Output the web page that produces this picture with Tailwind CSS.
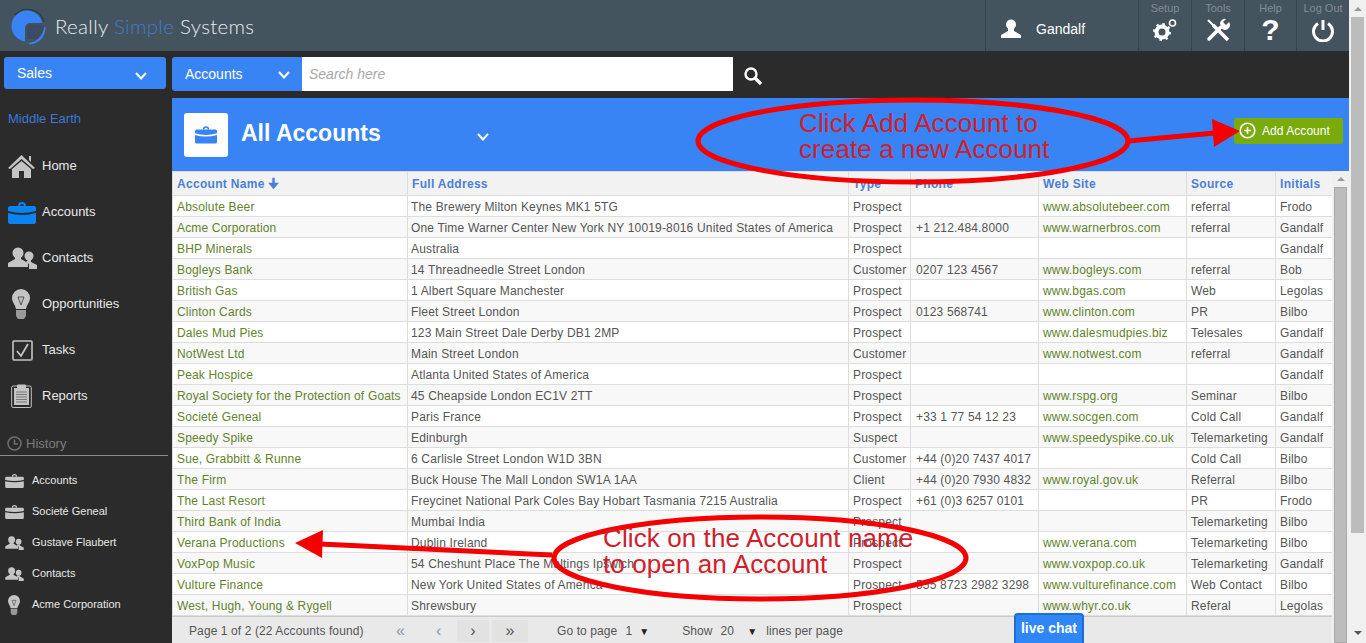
<!DOCTYPE html>
<html lang="en">
<head>
  <meta charset="UTF-8">
  <title>All Accounts - Really Simple Systems</title>
  <script src="https://cdn.jsdelivr.net/npm/@tailwindcss/browser@4"></script>
</head>
<body class="relative h-[643px] w-[1366px] overflow-hidden bg-[#2b2b2b] font-['Liberation_Sans',Arial,sans-serif]">

  <div class="flex h-[643px]">
    <div class="flex w-[1349px] flex-col">

      <!-- top bar -->
      <header class="flex h-[51px] shrink-0 items-stretch bg-[#44545f]">
        <div class="flex flex-1 items-center pl-[11px] pt-[2px]">
          <svg width="36" height="38" viewBox="0 0 36 38">
            <circle cx="16" cy="18" r="15.5" fill="#3884f4"/>
            <path d="M4 7 a17 17 0 0 1 29 7" fill="none" stroke="#2f3d48" stroke-width="1.4"/>
            <path d="M14 20 a5 5 0 0 1 5 -5 H36 V34 H14z" fill="#44545f"/>
            <path d="M15.5 21 a4.5 4.5 0 0 1 4.5 -4.5 H32.5 Q32.5 26 26 31 H15.5z" fill="#3c4a63"/>
            <path d="M17 35 Q30 34 33.5 19 L34.5 19 Q34 34 19 36.5z" fill="#3884f4"/>
          </svg>
          <span class="ml-[8px] font-['Lato',sans-serif] text-[20.5px] font-light tracking-[0.3px] text-[#e8ecee]">Really <span class="text-[#3f7cc9]">Simple</span> Systems</span>
        </div>
        <div class="flex w-[153px] items-center border-l border-[#36434c] pl-[15px] pt-[7px]">
          <svg width="20" height="20" viewBox="0 0 20 20" fill="#fff"><circle cx="10" cy="5.5" r="5"/><path d="M7 9 h6 v3 l7 4 v3 h-20 v-3 l7 -4z"/></svg>
          <span class="ml-[15px] text-[14px] text-white">Gandalf</span>
        </div>
        <div class="flex w-[53px] flex-col items-center border-l border-[#36434c] pt-[2px]">
          <span class="text-[11px] leading-[13px] text-[#808c94]">Setup</span>
          <svg class="mt-[3px]" width="24" height="24" viewBox="0 0 24 24" fill="none" stroke="#fff"><circle cx="9" cy="14" r="5.5" stroke-width="4"/><circle cx="9" cy="14" r="8" stroke-width="2" stroke-dasharray="2.5 3.8"/><circle cx="19.5" cy="5" r="3" stroke-width="1.6"/></svg>
        </div>
        <div class="flex w-[53px] flex-col items-center border-l border-[#36434c] pt-[2px]">
          <span class="text-[11px] leading-[13px] text-[#808c94]">Tools</span>
          <svg class="mt-[3px]" width="24" height="24" viewBox="0 0 24 24" fill="none" stroke="#fff"><path d="M2 2 L8 8" stroke-width="2"/><path d="M7 7 L22 22" stroke-width="3.5"/><path d="M3 21 L15 9" stroke-width="3.5" stroke-linecap="round"/><path d="M14 5 a5 5 0 0 1 6 -4 l-3 3 l3 3 l3 -3 a5 5 0 0 1 -8 6z" fill="#fff" stroke="none"/></svg>
        </div>
        <div class="flex w-[52px] flex-col items-center border-l border-[#36434c] pt-[2px]">
          <span class="text-[11px] leading-[13px] text-[#808c94]">Help</span>
          <span class="text-[30px] font-bold leading-[30px] text-white">?</span>
        </div>
        <div class="flex w-[53px] flex-col items-center border-l border-[#36434c] pt-[2px]">
          <span class="text-[11px] leading-[13px] text-[#808c94]">Log Out</span>
          <svg class="mt-[3px]" width="24" height="24" viewBox="0 0 24 24" fill="none" stroke="#fff" stroke-width="3"><path d="M7 5.5 a9.5 9.5 0 1 0 10 0"/><path d="M12 2 V12"/></svg>
        </div>
      </header>

      <div class="flex min-h-0 flex-1">

        <!-- sidebar -->
        <aside class="flex w-[172px] shrink-0 flex-col">
          <div class="ml-[4px] mr-[6px] mt-[6px] flex h-[32px] items-center justify-between rounded-[3px] bg-[#3884f4] pl-[13px] pr-[19px]">
            <span class="text-[14px] text-white">Sales</span>
            <svg class="mt-[5px]" width="12" height="8" viewBox="0 0 12 8" fill="none" stroke="#fff" stroke-width="2"><path d="M1 1 L6 6.5 L11 1"/></svg>
          </div>
          <div class="mt-[22px] pl-[8px] text-[13px] leading-[16px] text-[#3a78d8]">Middle Earth</div>

          <nav class="mt-[16px] flex flex-col">
            <a class="flex h-[46px] items-center pl-[8px] text-[13px] text-[#e8e8e8]">
              <span class="flex w-[34px] justify-start"><svg width="27" height="24" viewBox="0 0 27 24" fill="#c4c4c4"><path d="M13.5 1 L27 14 L25 15 L13.5 5 L2 15 L0 14z"/><path d="M21 2 h2 v6 l-2 -2z"/><path d="M13.5 7 L23 15 V24 H16 V17 H11 V24 H4 V15z"/></svg></span>Home
            </a>
            <a class="flex h-[46px] items-center pl-[8px] text-[13px] text-[#e8e8e8]">
              <span class="flex w-[34px] justify-start"><svg width="28" height="23" viewBox="0 0 28 23" fill="#0a84f0"><path d="M10 5 a4 4 0 0 1 8 0 h-2 a2 2 0 0 0 -4 0z"/><path d="M2 5 H26 a2 2 0 0 1 2 2 V10 Q14 14 0 10 V7 a2 2 0 0 1 2 -2z"/><path d="M0 12 Q14 16 28 12 V21 a2 2 0 0 1 -2 2 H2 a2 2 0 0 1 -2 -2z"/></svg></span>Accounts
            </a>
            <a class="flex h-[46px] items-center pl-[8px] text-[13px] text-[#e8e8e8]">
              <span class="flex w-[34px] justify-start"><svg width="29" height="22" viewBox="0 0 29 22" fill="#c4c4c4"><circle cx="10" cy="6" r="5.5"/><path d="M7 10 h6 v2 l7 4 v4 h-20 v-4 l7 -4z"/><circle cx="21" cy="9" r="4.5"/><path d="M20 13 h3 v2 l6 3 v4 h-8 v-5 l-3 -2z"/></svg></span>Contacts
            </a>
            <a class="flex h-[46px] items-center pl-[8px] text-[13px] text-[#e8e8e8]">
              <span class="flex w-[34px] justify-start pl-[4px]"><svg width="18" height="30" viewBox="0 0 18 30"><path d="M9 0 a9 9 0 0 1 9 9 c0 4 -3 6 -4 11 H4 C3 15 0 13 0 9 a9 9 0 0 1 9 -9z" fill="#c4c4c4"/><path d="M6 8 h6 L9 16z" fill="none" stroke="#555" stroke-width="1"/><path d="M4 21 h10 v6 l-2 3 H6 l-2 -3z" fill="#9a9a9a"/></svg></span>Opportunities
            </a>
            <a class="flex h-[46px] items-center pl-[8px] text-[13px] text-[#e8e8e8]">
              <span class="flex w-[34px] justify-start pl-[4px]"><svg width="21" height="21" viewBox="0 0 21 21" fill="none"><rect x="1" y="1" width="19" height="19" rx="1" stroke="#c4c4c4" stroke-width="1.6"/><path d="M5 11 L9 16 L16 4" stroke="#c4c4c4" stroke-width="1.8"/></svg></span>Tasks
            </a>
            <a class="flex h-[46px] items-center pl-[8px] text-[13px] text-[#e8e8e8]">
              <span class="flex w-[34px] justify-start pl-[3px]"><svg width="21" height="24" viewBox="0 0 21 24"><rect x="0.7" y="2" width="19.6" height="21.5" rx="1.5" fill="#2b2b2b" stroke="#c4c4c4"/><rect x="3" y="4" width="15" height="17" fill="#c4c4c4"/><path d="M5 8h11M5 10.5h11M5 13h11M5 15.5h11M5 18h11" stroke="#777" stroke-width="1"/><rect x="6" y="0.5" width="9" height="4" rx="1" fill="#c4c4c4"/></svg></span>Reports
            </a>
          </nav>

          <div class="mt-[16px] mr-[4px] flex items-center border-b border-[#8a8a8a] pb-[3px] pl-[7px] text-[13px] leading-[17px] text-[#7d7d7d]">
            <svg class="mr-[4px]" width="15" height="15" viewBox="0 0 15 15" fill="none" stroke="#6e6e6e" stroke-width="1.5"><circle cx="7.5" cy="7.5" r="6.5"/><path d="M7.5 3.5 V8 H11"/></svg>History
          </div>

          <div class="mt-[9px] flex flex-col text-[11px] text-[#e8e8e8]">
            <a class="flex h-[31px] items-center pl-[5px]"><span class="w-[27px]"><svg width="19" height="14" viewBox="0 0 28 21" fill="#c4c4c4"><path d="M10 4 a4 4 0 0 1 8 0 h-2 a2 2 0 0 0 -4 0z"/><path d="M2 4 H26 a2 2 0 0 1 2 2 V9 Q14 12 0 9 V6 a2 2 0 0 1 2 -2z"/><path d="M0 11 Q14 14 28 11 V19 a2 2 0 0 1 -2 2 H2 a2 2 0 0 1 -2 -2z"/></svg></span>Accounts</a>
            <a class="flex h-[31px] items-center pl-[5px]"><span class="w-[27px]"><svg width="19" height="14" viewBox="0 0 28 21" fill="#c4c4c4"><path d="M10 4 a4 4 0 0 1 8 0 h-2 a2 2 0 0 0 -4 0z"/><path d="M2 4 H26 a2 2 0 0 1 2 2 V9 Q14 12 0 9 V6 a2 2 0 0 1 2 -2z"/><path d="M0 11 Q14 14 28 11 V19 a2 2 0 0 1 -2 2 H2 a2 2 0 0 1 -2 -2z"/></svg></span>Societé Geneal</a>
            <a class="flex h-[31px] items-center pl-[5px]"><span class="w-[27px]"><svg width="19" height="14" viewBox="0 0 29 22" fill="#c4c4c4"><circle cx="10" cy="6" r="5.5"/><path d="M7 10 h6 v2 l7 4 v4 h-20 v-4 l7 -4z"/><circle cx="21" cy="9" r="4.5"/><path d="M20 13 h3 v2 l6 3 v4 h-8 v-5 l-3 -2z"/></svg></span>Gustave Flaubert</a>
            <a class="flex h-[31px] items-center pl-[5px]"><span class="w-[27px]"><svg width="19" height="14" viewBox="0 0 29 22" fill="#c4c4c4"><circle cx="10" cy="6" r="5.5"/><path d="M7 10 h6 v2 l7 4 v4 h-20 v-4 l7 -4z"/><circle cx="21" cy="9" r="4.5"/><path d="M20 13 h3 v2 l6 3 v4 h-8 v-5 l-3 -2z"/></svg></span>Contacts</a>
            <a class="flex h-[31px] items-center pl-[8px]"><span class="w-[24px]"><svg width="12" height="20" viewBox="0 0 18 30"><path d="M9 0 a9 9 0 0 1 9 9 c0 4 -3 6 -4 11 H4 C3 15 0 13 0 9 a9 9 0 0 1 9 -9z" fill="#c4c4c4"/><path d="M6 8 h6 L9 16z" fill="none" stroke="#555"/><path d="M4 21 h10 v6 l-2 3 H6 l-2 -3z" fill="#9a9a9a"/></svg></span>Acme Corporation</a>
          </div>
        </aside>

        <!-- main -->
        <main class="flex min-w-0 flex-1 flex-col">
          <div class="mt-[6px] flex h-[34px] shrink-0 items-stretch">
            <div class="flex w-[130px] items-center justify-between rounded-l-[3px] bg-[#3884f4] pl-[13px] pr-[12px]">
              <span class="text-[14px] text-white">Accounts</span>
              <svg class="mt-[2px]" width="12" height="8" viewBox="0 0 12 8" fill="none" stroke="#fff" stroke-width="2"><path d="M1 1 L6 6.5 L11 1"/></svg>
            </div>
            <div class="flex w-[431px] items-center bg-white pl-[7px] text-[14px] italic text-[#a8a8a8]">Search here</div>
            <div class="flex w-[40px] items-center justify-center pt-[3px]">
              <svg width="20" height="20" viewBox="0 0 20 20" fill="none" stroke="#fff"><circle cx="8" cy="8" r="5.5" stroke-width="2.4"/><path d="M12 12 L18 18" stroke-width="3.2"/></svg>
            </div>
          </div>

          <div class="mt-[7px] flex h-[73px] shrink-0 items-center bg-[#3884f4] pl-[12px] pr-[6px]">
            <div class="flex h-[44px] w-[44px] items-center justify-center rounded-[3px] bg-white">
              <svg width="22" height="19" viewBox="0 0 28 23" fill="#3884f4"><path d="M10 5 a4 4 0 0 1 8 0 h-2 a2 2 0 0 0 -4 0z"/><path d="M2 5 H26 a2 2 0 0 1 2 2 V10 Q14 14 0 10 V7 a2 2 0 0 1 2 -2z"/><path d="M0 12 Q14 16 28 12 V21 a2 2 0 0 1 -2 2 H2 a2 2 0 0 1 -2 -2z"/></svg>
            </div>
            <h1 class="mb-[2px] ml-[13px] text-[23px] font-bold text-white">All Accounts</h1>
            <svg class="ml-[96px] mt-[5px]" width="12" height="8" viewBox="0 0 12 8" fill="none" stroke="#fff" stroke-width="2"><path d="M1 1 L6 6.5 L11 1"/></svg>
            <div class="mb-[8px] ml-auto flex h-[26px] w-[109px] items-center rounded-[2px] bg-[#7aab0c] pl-[5px] text-[12px] tracking-[0.05px] text-white">
              <svg class="mr-[6px]" width="17" height="17" viewBox="0 0 17 17" fill="none" stroke="#fff"><circle cx="8.5" cy="8.5" r="7.3" stroke-width="1.6"/><path d="M8.5 5 V12 M5 8.5 H12" stroke-width="1.6"/></svg>Add Account
            </div>
          </div>

          <div class="flex min-h-0 flex-1 overflow-hidden">
            <div class="flex w-[1160px] flex-col">
              <div class="min-h-0 flex-1 overflow-hidden bg-white">
                <table class="w-[1160px] table-fixed border-collapse text-[12px] tracking-[0.17px] text-[#555] [&_td]:h-[21px] [&_td]:overflow-hidden [&_td]:whitespace-nowrap [&_td]:border [&_td]:border-[#ddd] [&_td]:pl-[4px] [&_td]:pt-[2px] [&_td:nth-child(1)]:text-[#64822a] [&_td:nth-child(2)]:pl-[3px] [&_td:nth-child(4)]:pl-[5px] [&_td:nth-child(5)]:text-[#64822a] [&_th]:h-[24px] [&_th]:border [&_th]:border-[#ddd] [&_th]:bg-[#f2f2f2] [&_th]:pl-[4px] [&_th]:text-left [&_th]:font-bold [&_th]:tracking-[0.3px] [&_th]:text-[#4a80d8] [&_tbody_tr:nth-child(even)]:bg-[#f8f8f8]">
                  <colgroup>
                    <col class="w-[235px]"><col class="w-[441px]"><col class="w-[62px]"><col class="w-[128px]"><col class="w-[148px]"><col class="w-[89px]"><col class="w-[57px]">
                  </colgroup>
                  <thead>
                    <tr><th>Account Name <span class="text-[13px]">&#129035;</span></th><th>Full Address</th><th>Type</th><th>Phone</th><th>Web Site</th><th>Source</th><th>Initials</th></tr>
                  </thead>
                  <tbody>
                    <tr><td>Absolute Beer</td><td>The Brewery Milton Keynes MK1 5TG</td><td>Prospect</td><td></td><td>www.absolutebeer.com</td><td>referral</td><td>Frodo</td></tr>
                    <tr><td>Acme Corporation</td><td>One Time Warner Center New York NY 10019-8016 United States of America</td><td>Prospect</td><td>+1 212.484.8000</td><td>www.warnerbros.com</td><td>referral</td><td>Gandalf</td></tr>
                    <tr><td>BHP Minerals</td><td>Australia</td><td>Prospect</td><td></td><td></td><td></td><td>Gandalf</td></tr>
                    <tr><td>Bogleys Bank</td><td>14 Threadneedle Street London</td><td>Customer</td><td>0207 123 4567</td><td>www.bogleys.com</td><td>referral</td><td>Bob</td></tr>
                    <tr><td>British Gas</td><td>1 Albert Square Manchester</td><td>Prospect</td><td></td><td>www.bgas.com</td><td>Web</td><td>Legolas</td></tr>
                    <tr><td>Clinton Cards</td><td>Fleet Street London</td><td>Prospect</td><td>0123 568741</td><td>www.clinton.com</td><td>PR</td><td>Bilbo</td></tr>
                    <tr><td>Dales Mud Pies</td><td>123 Main Street Dale Derby DB1 2MP</td><td>Prospect</td><td></td><td>www.dalesmudpies.biz</td><td>Telesales</td><td>Gandalf</td></tr>
                    <tr><td>NotWest Ltd</td><td>Main Street London</td><td>Customer</td><td></td><td>www.notwest.com</td><td>referral</td><td>Gandalf</td></tr>
                    <tr><td>Peak Hospice</td><td>Atlanta United States of America</td><td>Prospect</td><td></td><td></td><td></td><td>Gandalf</td></tr>
                    <tr><td>Royal Society for the Protection of Goats</td><td>45 Cheapside London EC1V 2TT</td><td>Prospect</td><td></td><td>www.rspg.org</td><td>Seminar</td><td>Bilbo</td></tr>
                    <tr><td>Societé Geneal</td><td>Paris France</td><td>Prospect</td><td>+33 1 77 54 12 23</td><td>www.socgen.com</td><td>Cold Call</td><td>Gandalf</td></tr>
                    <tr><td>Speedy Spike</td><td>Edinburgh</td><td>Suspect</td><td></td><td>www.speedyspike.co.uk</td><td>Telemarketing</td><td>Gandalf</td></tr>
                    <tr><td>Sue, Grabbitt &amp; Runne</td><td>6 Carlisle Street London W1D 3BN</td><td>Customer</td><td>+44 (0)20 7437 4017</td><td></td><td>Cold Call</td><td>Bilbo</td></tr>
                    <tr><td>The Firm</td><td>Buck House The Mall London SW1A 1AA</td><td>Client</td><td>+44 (0)20 7930 4832</td><td>www.royal.gov.uk</td><td>Referral</td><td>Bilbo</td></tr>
                    <tr><td>The Last Resort</td><td>Freycinet National Park Coles Bay Hobart Tasmania 7215 Australia</td><td>Prospect</td><td>+61 (0)3 6257 0101</td><td></td><td>PR</td><td>Frodo</td></tr>
                    <tr><td>Third Bank of India</td><td>Mumbai India</td><td>Prospect</td><td></td><td></td><td>Telemarketing</td><td>Bilbo</td></tr>
                    <tr><td>Verana Productions</td><td>Dublin Ireland</td><td>Prospect</td><td></td><td>www.verana.com</td><td>Telemarketing</td><td>Bilbo</td></tr>
                    <tr><td>VoxPop Music</td><td>54 Cheshunt Place The Maltings Ipswich</td><td>Prospect</td><td></td><td>www.voxpop.co.uk</td><td>Telemarketing</td><td>Gandalf</td></tr>
                    <tr><td>Vulture Finance</td><td>New York United States of America</td><td>Prospect</td><td>555 8723 2982 3298</td><td>www.vulturefinance.com</td><td>Web Contact</td><td>Bilbo</td></tr>
                    <tr><td>West, Hugh, Young &amp; Rygell</td><td>Shrewsbury</td><td>Prospect</td><td></td><td>www.whyr.co.uk</td><td>Referal</td><td>Legolas</td></tr>
                  </tbody>
                </table>
              </div>

              <footer class="flex h-[27px] shrink-0 items-center border-t border-[#ccc] bg-[#e9e9e9] pl-[17px] pt-[2px] text-[12px] tracking-[0.1px] text-[#555]">
                <span class="w-[207px]">Page 1 of 2 (22 Accounts found)</span>
                <span class="w-[40px] text-[16px] text-[#8a99ab]">&#171;</span>
                <span class="w-[21px] text-[16px] text-[#8a99ab]">&#8249;</span>
                <span class="flex h-[22px] w-[32px] items-center justify-center bg-[#e2e2e2] text-[16px]">&#8250;</span>
                <span class="ml-[3px] flex h-[22px] w-[36px] items-center justify-center bg-[#e2e2e2] text-[16px]">&#187;</span>
                <span class="ml-[29px]">Go to page</span>
                <span class="ml-[8px]">1</span>
                <span class="ml-[7px] text-[10px] text-[#222]">&#9660;</span>
                <span class="ml-[33px]">Show</span>
                <span class="ml-[8px]">20</span>
                <span class="ml-[13px] text-[10px] text-[#222]">&#9660;</span>
                <span class="ml-[9px]">lines per page</span>
              </footer>
            </div>

            <!-- table scrollbar -->
            <div class="flex w-[17px] flex-col items-center bg-[#f0f0f0]">
              <span class="mt-[6px] h-0 w-0 border-x-[4px] border-b-[4px] border-x-transparent border-b-[#999]"></span>
              <div class="mt-[6px] w-[13px] flex-1 border border-[#aaa] bg-[#bcbcbc]"></div>
            </div>
          </div>
        </main>
      </div>
    </div>

    <!-- page scrollbar -->
    <div class="flex w-[17px] flex-col items-center bg-[#f0f0f0]">
      <span class="mt-[7px] h-0 w-0 border-x-[4px] border-b-[4px] border-x-transparent border-b-[#999]"></span>
      <div class="mt-[6px] h-[516px] w-[13px] bg-[#bcbcbc]"></div>
      <span class="mt-auto mb-[8px] h-0 w-0 border-x-[4px] border-t-[4px] border-x-transparent border-t-[#555]"></span>
    </div>
  </div>

  <!-- live chat tab -->
  <div class="absolute left-[1014px] top-[613px] flex h-[30px] w-[70px] justify-center rounded-t-[4px] border-2 border-b-0 border-[#1b6fd6] bg-[#2f86f5] pt-[3px] text-[14px] font-bold text-white">live chat</div>

  <!-- red annotations -->
  <svg class="absolute left-0 top-0" width="1366" height="643" viewBox="0 0 1366 643" fill="none">
    <ellipse cx="913" cy="141" rx="215" ry="41" stroke="#f40000" stroke-width="5"/>
    <path d="M1128 141 L1215 133" stroke="#f40000" stroke-width="5"/>
    <path d="M1240 131 L1212 119 L1214 147z" fill="#f40000"/>
    <ellipse cx="760" cy="558" rx="206" ry="41" stroke="#f40000" stroke-width="5"/>
    <path d="M552 555 L320 544" stroke="#f40000" stroke-width="5"/>
    <path d="M295 543 L323 530 L322 558z" fill="#f40000"/>
  </svg>
  <div class="absolute left-[799px] top-[110px] text-[26px] leading-[26px] tracking-[0.1px] text-[#d0202c]">Click Add Account to<br>create a new Account</div>
  <div class="absolute left-[603px] top-[525px] text-[26px] leading-[26px] tracking-[0.1px] text-[#d0202c]">Click on the Account name<br>to open an Account</div>
</body>
</html>
